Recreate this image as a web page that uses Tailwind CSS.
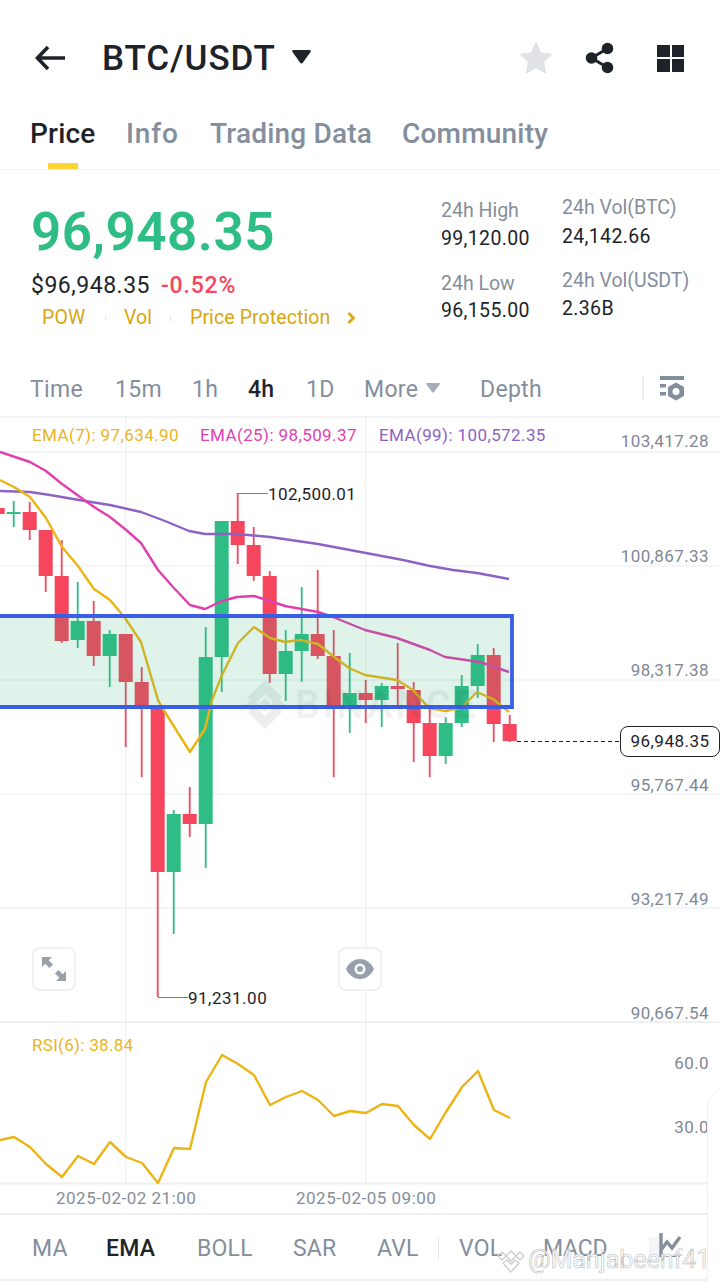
<!DOCTYPE html>
<html lang="en">
<head>
<meta charset="utf-8">
<title>BTC/USDT</title>
<script src="https://cdn.jsdelivr.net/npm/@tailwindcss/browser@4"></script>
</head>
<body class="m-0 bg-white">
<div class="relative w-[720px] h-[1282px] overflow-hidden bg-white font-['Roboto',sans-serif] text-[#1e2329]">

  <!-- header -->
  <header class="flex items-center h-[116px] pl-[35px] pr-[36px]">
    <svg width="30" height="26" viewBox="0 0 30 26" class="mr-[37px]" fill="none" stroke="#1e2329" stroke-width="3.6"><path d="M30 13H3M13 2 2.5 13 13 24"/></svg>
    <span class="text-[35px] leading-none font-medium tracking-[0.9px] w-[190px]">BTC/USDT</span>
    <svg width="19" height="14" viewBox="0 0 19 14" class="-mt-[2px]"><path d="M1.5 0H17.5Q19.5 0 18.5 2L11 12.5Q9.5 14.5 8 12.5L0.5 2Q-.5 0 1.5 0Z" fill="#1e2329"/></svg>
    <div class="flex-1"></div>
    <svg width="32" height="32" viewBox="0 0 32 32" class="mr-[33px]"><path d="M16 1 20.6 11 31 12.4 23.4 19.8 25.3 30.5 16 25.4 6.7 30.5 8.6 19.8 1 12.4 11.4 11Z" fill="#dfe2e6" stroke="#dfe2e6" stroke-width="1.5" stroke-linejoin="round"/></svg>
    <svg width="30" height="32" viewBox="0 0 30 32" class="mr-[42px]" fill="#1e2329"><circle cx="22.5" cy="6.5" r="5.8"/><circle cx="6.5" cy="16" r="5.8"/><circle cx="22.5" cy="25.5" r="5.8"/><path d="M22.5 6.5 6.5 16 22.5 25.5" fill="none" stroke="#1e2329" stroke-width="3"/></svg>
    <div class="grid grid-cols-2 gap-[2px] w-[27px] h-[27px]">
      <div class="bg-[#1e2329]"></div><div class="bg-[#1e2329]"></div><div class="bg-[#1e2329]"></div><div class="bg-[#1e2329]"></div>
    </div>
  </header>

  <!-- tabs -->
  <nav class="relative flex items-start h-[54px] pl-[30px] border-b border-[#eef0f2] text-[28px] leading-[34px] font-medium text-[#848e9c] pt-[1px] tracking-[0.2px]">
    <span class="w-[96px] text-[#1e2329]">Price</span>
    <span class="w-[84px] tracking-[0.9px]">Info</span>
    <span class="w-[192px]">Trading Data</span>
    <span>Community</span>
    <div class="absolute left-[48px] bottom-0 w-[30px] h-[6px] bg-[#fcd535]"></div>
  </nav>

  <!-- stats -->
  <section class="flex h-[195px]">
    <div class="w-[441px] pl-[31px] pt-[29px]">
      <div class="text-[53px] leading-[66px] font-semibold text-[#2ebd85] tracking-[0.5px]">96,948.35</div>
      <div class="flex mt-[7px] text-[23px] leading-[28px] tracking-[0.5px]">
        <span class="w-[130px]">$96,948.35</span>
        <span class="font-medium text-[#f6465d] tracking-[0.8px]">-0.52%</span>
      </div>
      <div class="flex items-center pl-[11px] mt-[5px] text-[19.5px] leading-[26px] text-[#d9a60e] tracking-[0.1px]">
        <span class="w-[63px]">POW</span>
        <span class="w-[19px] h-[6px]"><span class="block w-[1px] h-[6px] bg-[#e6e8ea]"></span></span>
        <span class="w-[46px]">Vol</span>
        <span class="w-[20px] h-[6px]"><span class="block w-[1px] h-[6px] bg-[#e6e8ea]"></span></span>
        <span class="w-[157px]">Price Protection</span>
        <svg width="9" height="14" viewBox="0 0 9 14" fill="none" stroke="#d9a60e" stroke-width="2.6"><path d="M1.5 2 6.5 7 1.5 12"/></svg>
      </div>
    </div>
    <div class="w-[121px] pt-[28px] text-[19.5px] leading-[26px]">
      <div class="text-[#848e9c]">24h High</div>
      <div class="mt-[2px] tracking-[0.35px]">99,120.00</div>
      <div class="text-[#848e9c] mt-[19px]">24h Low</div>
      <div class="mt-[1px] tracking-[0.35px]">96,155.00</div>
    </div>
    <div class="flex-1 pt-[25px] text-[19.5px] leading-[26px]">
      <div class="text-[#848e9c]">24h Vol(BTC)</div>
      <div class="mt-[3px] tracking-[0.35px]">24,142.66</div>
      <div class="text-[#848e9c] mt-[18px]">24h Vol(USDT)</div>
      <div class="mt-[2px] tracking-[0.35px]">2.36B</div>
    </div>
  </section>

  <!-- time row -->
  <div class="flex items-center h-[53px] pl-[30px] border-b-2 border-[#f2f3f5] text-[23px] text-[#848e9c] tracking-[0.3px]">
    <span class="w-[85px]">Time</span>
    <span class="w-[77px]">15m</span>
    <span class="w-[56px]">1h</span>
    <span class="w-[58px] font-medium text-[#1e2329]">4h</span>
    <span class="w-[58px]">1D</span>
    <span class="w-[62px]">More</span>
    <svg width="14" height="10" viewBox="0 0 14 10" class="-mt-[5px]"><path d="M1 0H13Q14.500 0 13.500 1.500L8 9Q7 10 6 9L.5 1.500Q-.5 0 1 0Z" fill="#a5acb7"/></svg>
    <span class="ml-[40px] w-[162px]">Depth</span>
    <span class="w-[2px] h-[24px] bg-[#eceef0] -mt-[6px]"></span>
    <svg width="24" height="26" viewBox="0 0 24 26" class="ml-[16px] -mt-[3px]" fill="#848e9c"><rect x="0" y="0" width="24" height="4"/><rect x="0" y="8" width="6" height="3.500"/><rect x="0" y="16" width="6" height="3.500"/><path fill-rule="evenodd" d="M16 6.500 24 11V20L16 24.500 8 20V11ZM16 12A3.500 3.500 0 1 0 16 19 3.500 3.500 0 0 0 16 12Z"/></svg>
  </div>

  <!-- chart: a free canvas whose coordinates are page coordinates -->
  <div class="relative h-[795px]">
    <svg class="absolute left-0 top-0" width="720" height="795" viewBox="0 418 720 795" fill="none">
      <g stroke="#f1f2f4" stroke-width="1.5">
        <path d="M0 452H720M0 566H720M0 680H720M0 794H720M0 908H720M125.700 418V1183M365.700 418V1183"/>
      </g>
      <path d="M0 1022H720M0 1183.500H720" stroke="#eef0f2" stroke-width="2"/>

      <!-- watermark logo -->
      <g fill="#eceeee">
        <path d="M265 698 272 705 265 712 258 705Z"/>
        <path d="M252 698 259 705 252 712 245 705Z"/>
        <path d="M278 698 285 705 278 712 271 705Z"/>
        <path d="M265 680 282 697 275 704 265 694 255 704 248 697Z"/>
        <path d="M265 729 282 712 275 705 265 716 255 705 248 712Z"/>
      </g>

      <!-- wicks -->
      <g stroke="#f6465d" stroke-width="1.800">
        <path d="M29.700 502V540M45.700 530V592M61.700 540V643M93.700 601V666M125.700 634V747M141.700 667V777M157.700 705V997M189.700 787V837M237.700 493V564M253.700 527V581M269.700 571V683M317.700 570V659M333.700 630V777M365.700 680V723M397.700 643V705M413.700 682V762M429.700 708V777M493.700 648V742M509.700 715V742"/>
      </g>
      <g stroke="#2ebd85" stroke-width="1.800">
        <path d="M13.700 501V527M77.700 582V648M109.700 630V687M173.700 810V934M205.700 627V868M221.700 521V692M285.700 630V701M301.700 587V682M349.700 653V733M381.700 683V727M445.700 717V764M461.700 675V727M477.700 644V698"/>
      </g>
      <!-- red bodies -->
      <g fill="#f6465d">
        <rect x="-9.300" y="508" width="14" height="6"/>
        <rect x="22.700" y="512" width="14" height="18"/>
        <rect x="38.700" y="530" width="14" height="46"/>
        <rect x="54.700" y="576" width="14" height="65"/>
        <rect x="86.700" y="621" width="14" height="35"/>
        <rect x="118.700" y="634" width="14" height="48"/>
        <rect x="134.700" y="682" width="14" height="24"/>
        <rect x="150.700" y="705" width="14" height="167"/>
        <rect x="182.700" y="814" width="14" height="10"/>
        <rect x="230.700" y="521" width="14" height="24"/>
        <rect x="246.700" y="545" width="14" height="31"/>
        <rect x="262.700" y="576" width="14" height="98"/>
        <rect x="310.700" y="634" width="14" height="22"/>
        <rect x="326.700" y="656" width="14" height="49"/>
        <rect x="358.700" y="693" width="14" height="7"/>
        <rect x="390.700" y="686" width="14" height="3"/>
        <rect x="406.700" y="690" width="14" height="33"/>
        <rect x="422.700" y="723" width="14" height="33"/>
        <rect x="486.700" y="655" width="14" height="69"/>
        <rect x="502.700" y="724" width="14" height="17"/>
      </g>
      <!-- green bodies -->
      <g fill="#2ebd85">
        <rect x="6.700" y="512" width="14" height="2"/>
        <rect x="70.700" y="621" width="14" height="19"/>
        <rect x="102.700" y="634" width="14" height="22"/>
        <rect x="166.700" y="814" width="14" height="58"/>
        <rect x="198.700" y="657" width="14" height="167"/>
        <rect x="214.700" y="521" width="14" height="136"/>
        <rect x="278.700" y="651" width="14" height="23"/>
        <rect x="294.700" y="634" width="14" height="17"/>
        <rect x="342.700" y="693" width="14" height="13"/>
        <rect x="374.700" y="686" width="14" height="14"/>
        <rect x="438.700" y="723" width="14" height="33"/>
        <rect x="454.700" y="686" width="14" height="37"/>
        <rect x="470.700" y="655" width="14" height="31"/>
      </g>

      <!-- EMA lines -->
      <polyline stroke="#8e62c4" stroke-width="2.400" stroke-linejoin="round" points="0,491 30,492 50,495 85,501 110,505 141,512 165,521 189,531 205,534 237,534 270,537 318,544 350,550 403,560 430,566 453,570 477,573 509,579"/>
      <polyline stroke="#e23fae" stroke-width="2.400" stroke-linejoin="round" points="0,452 30,462 46,471 62,484 94,507 110,517 125,529 141,543 158,570 173,587 190,605 205,609 222,601 237,597 254,596 270,601 285,606 318,612 333,617 365,630 397,638 430,650 445,657 480,662 509,672"/>
      <polyline stroke="#ecb413" stroke-width="2.400" stroke-linejoin="round" points="0,480 14,487 30,497 46,518 62,547 78,566 94,589 110,600 125,618 141,642 158,700 163,709 190,752 205,729 212,700 222,675 238,643 254,627 270,638 285,642 300,640 318,644 333,656 349,668 365,675 397,680 413,690 429,708 445,711 461,708 477,692 493,699 509,712"/>

      <!-- highlighted zone -->
      <rect x="0" y="616" width="512" height="91" fill="#2aac76" fill-opacity="0.15"/>
      <path d="M0 616H512V707H0" stroke="#3a5fe6" stroke-width="3.800"/>

      <!-- last price line -->
      <path d="M517 741.500H620" stroke="#1e2329" stroke-width="1" stroke-dasharray="4 3"/>
      <!-- extreme leaders -->
      <path d="M238 493.500H268M158 997.500H188" stroke="#777e88" stroke-width="1.200"/>

      <!-- RSI -->
      <polyline stroke="#ecb413" stroke-width="2.400" stroke-linejoin="round" points="0,1140 14,1137 30,1147 46,1164 62,1177 78,1156 94,1164 110,1142 126,1157 142,1163 158,1183 174,1148 190,1149 206,1082 222,1055 238,1064 254,1075 270,1105 286,1097 302,1091 318,1100 334,1116 350,1111 366,1113 382,1104 398,1106 414,1125 430,1139 446,1112 462,1087 478,1071 494,1110 510,1118"/>
    </svg>

    <!-- watermark word, faint enough to read through -->
    <span class="absolute left-[295px] top-[264px] text-[39px] leading-[46px] font-bold tracking-[2.500px] text-[#1e2329]/6">BINANCE</span>

    <!-- legend -->
    <div class="absolute left-[32px] top-[5px] flex text-[17px] leading-[24px] tracking-[0.4px]">
      <span class="w-[168px] text-[#eab422]">EMA(7): 97,634.90</span>
      <span class="w-[179px] text-[#e23fae]">EMA(25): 98,509.37</span>
      <span class="text-[#8e62c4]">EMA(99): 100,572.35</span>
    </div>
    <span class="absolute left-[32px] top-[615px] text-[17px] leading-[24px] tracking-[0.3px] text-[#eab422]">RSI(6): 38.84</span>

    <!-- axis -->
    <span class="absolute right-[11px] top-[11px] text-[17px] leading-[24px] tracking-[0.4px] text-[#7f8794]">103,417.28</span>
    <span class="absolute right-[11px] top-[126px] text-[17px] leading-[24px] tracking-[0.4px] text-[#7f8794]">100,867.33</span>
    <span class="absolute right-[11px] top-[240px] text-[17px] leading-[24px] tracking-[0.4px] text-[#7f8794]">98,317.38</span>
    <span class="absolute right-[11px] top-[355px] text-[17px] leading-[24px] tracking-[0.4px] text-[#7f8794]">95,767.44</span>
    <span class="absolute right-[11px] top-[469px] text-[17px] leading-[24px] tracking-[0.4px] text-[#7f8794]">93,217.49</span>
    <span class="absolute right-[11px] top-[583px] text-[17px] leading-[24px] tracking-[0.4px] text-[#7f8794]">90,667.54</span>
    <span class="absolute right-[11px] top-[633px] text-[17px] leading-[24px] tracking-[0.4px] text-[#7f8794]">60.0</span>
    <span class="absolute right-[11px] top-[697px] text-[17px] leading-[24px] tracking-[0.4px] text-[#7f8794]">30.0</span>

    <!-- price tag -->
    <div class="absolute left-[620px] top-[308px] flex items-center justify-center w-[100px] h-[31px] rounded-lg border border-[#1e2329] bg-white text-[17px] tracking-[0.5px]">96,948.35</div>

    <!-- extremes -->
    <span class="absolute left-[268px] top-[64px] text-[17px] leading-[24px] tracking-[0.4px]">102,500.01</span>
    <span class="absolute left-[188px] top-[568px] text-[17px] leading-[24px] tracking-[0.5px]">91,231.00</span>

    <!-- chart buttons -->
    <div class="absolute left-[32px] top-[529px] flex items-center justify-center w-[44px] h-[44px] rounded-lg border-2 border-[#eef0f2] bg-white">
      <svg width="26" height="26" viewBox="0 0 26 26" fill="#98a0ab"><path d="M1 1H11L7.700 4.300 12 8.500 8.500 12 4.300 7.700 1 11Z"/><path d="M25 25H15L18.300 21.700 14 17.500 17.500 14 21.700 18.300 25 15Z"/></svg>
    </div>
    <div class="absolute left-[338px] top-[529px] flex items-center justify-center w-[44px] h-[44px] rounded-lg border-2 border-[#eef0f2] bg-white">
      <svg width="30" height="22" viewBox="0 0 30 22"><path fill-rule="evenodd" d="M15 1C21.500 1 26.500 5.500 29 11 26.500 16.500 21.500 21 15 21S3.500 16.500 1 11C3.500 5.500 8.500 1 15 1ZM15 5.500A5.500 5.500 0 1 0 15 16.500 5.500 5.500 0 0 0 15 5.500ZM15 8A3 3 0 1 1 15 14 3 3 0 0 1 15 8Z" fill="#98a0ab"/></svg>
    </div>

    <!-- dates -->
    <span class="absolute left-[56px] top-[768px] text-[17px] leading-[24px] tracking-[0.5px] text-[#848e9c]">2025-02-02 21:00</span>
    <span class="absolute left-[296px] top-[768px] text-[17px] leading-[24px] tracking-[0.5px] text-[#848e9c]">2025-02-05 09:00</span>
  </div>

  <!-- indicators -->
  <div class="flex items-center h-[68px] pl-[32px] pt-[4px] border-y-2 border-[#eef0f2] text-[23px] text-[#848e9c] tracking-[0.2px]">
    <span class="w-[74px]">MA</span>
    <span class="w-[91px] font-medium text-[#1e2329]">EMA</span>
    <span class="w-[96px]">BOLL</span>
    <span class="w-[84px]">SAR</span>
    <span class="w-[61px]">AVL</span>
    <span class="w-[21px]"><span class="block w-[1px] h-[24px] bg-[#e6e8ea]"></span></span>
    <span class="w-[85px] -ml-[0px]">VOL</span>
    <span class="w-[106px] -ml-[1px] tracking-[-0.2px]">MACD</span>
    <span class="w-[10px] h-[18px] -mt-[6px] bg-[#f4f5f6]"></span>
    <svg width="22" height="24" viewBox="0 0 22 24" fill="none" stroke="#848e9c" stroke-width="3.400" class="-mt-[8px]"><path d="M2 0V24M2 17 8 9 13 15 21 4"/><path d="M7 24H21" stroke-width="2.500"/></svg>
  </div>

  <!-- rounded card peeking in on the right -->
  <div class="absolute left-[707px] top-[1088px] w-[40px] h-[220px] rounded-[20px] bg-white border border-[#f0f1f3]"></div>

  <!-- attribution overlay -->
  <div class="absolute left-[497px] top-[1246px] flex items-center">
    <svg width="28" height="28" viewBox="0 0 28 28" fill="none" stroke="#c9cbce" stroke-width="1.300"><path d="M1 10 5 6 9 10 5 14ZM9 10 14 5 19 10 14 15ZM19 10 23 6 27 10 23 14ZM6 17 14 26 22 17 18 14 14 18 10 14Z"/></svg>
    <span class="ml-[3px] text-[25px] leading-[26px] text-white [-webkit-text-stroke:0.6px_#b9bcc1] -mt-[1px]">@Manjabeenf41</span>
  </div>
</div>
</body>
</html>
